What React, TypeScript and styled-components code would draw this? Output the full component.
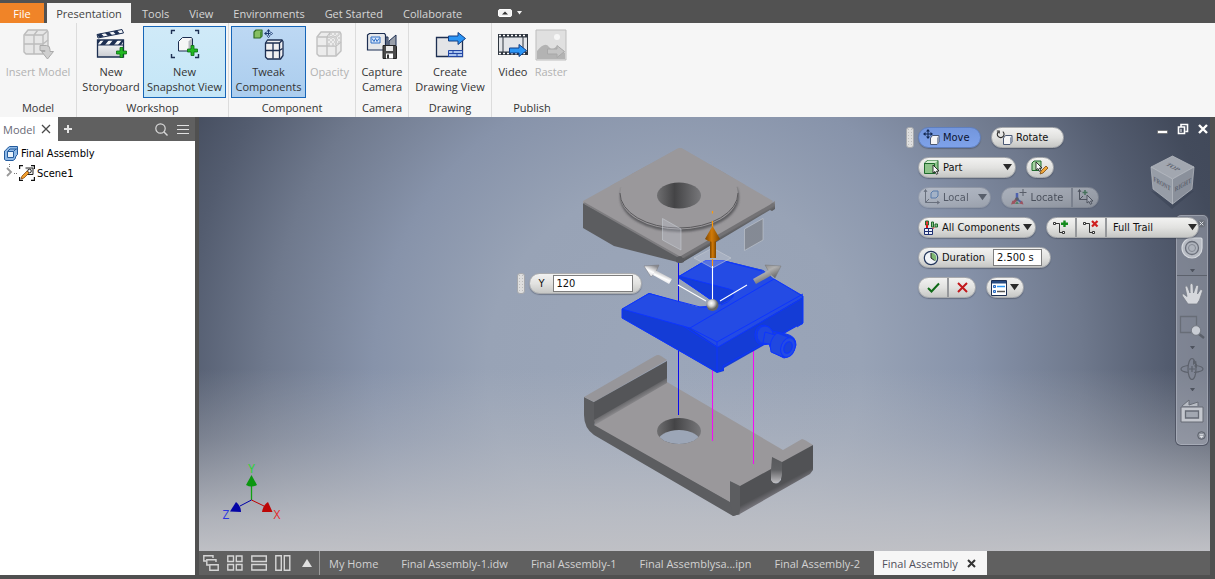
import React from "react";
import styled, { createGlobalStyle, css } from "styled-components";

const Global = createGlobalStyle`
  *, *::before, *::after { box-sizing: border-box; }
  body { margin: 0; background: #505050; }
  body, button, input, select {
    font-family: "Open Sans", "Noto Sans", sans-serif;
    font-size: 11px;
  }
  button { border: 0; padding: 0; background: none; color: inherit; cursor: pointer; }
  svg { display: block; flex: none; }
`;

const Shell = styled.div`
  min-height: 100vh;
  display: flex;
  flex-direction: column;
`;

/* ---------- ribbon ---------- */

const TabBar = styled.nav`
  display: flex;
  align-items: stretch;
  height: 23px;
  padding-top: 3px;
  background: #525252;
`;

const RibbonTab = styled.button<{ $kind?: "file" | "active" }>`
  padding: 0 10px;
  color: #d6d6d6;
  ${(p) => p.$kind === "file" && css`
    width: 44px;
    margin-right: 3px;
    background: #f08428;
    color: #fff;
  `}
  ${(p) => p.$kind === "active" && css`
    width: 84px;
    padding: 0;
    margin-right: 1px;
    background: #f6f6f6;
    color: #444;
  `}
`;

const RibbonToggle = styled.button`
  display: flex;
  align-items: center;
  gap: 5px;
  margin-left: 26px;
`;

const RibbonBody = styled.div`
  display: flex;
  height: 94px;
  background: #f6f6f6;
  color: #333;
`;

const Group = styled.section`
  display: flex;
  flex-direction: column;
  justify-content: space-between;
  padding: 3px 2px 0;
  border-right: 1px solid #dcdcdc;
  &:last-child { border-right: 0; }
`;

const GroupButtons = styled.div`
  display: flex;
`;

const GroupLabel = styled.h2`
  margin: 0;
  font-size: 11px;
  font-weight: 400;
  line-height: 18px;
  text-align: center;
`;

const ToolButton = styled.button<{ $w: number; $tone?: "hover" | "pressed" }>`
  display: flex;
  flex-direction: column;
  align-items: center;
  gap: 3px;
  width: ${(p) => p.$w}px;
  height: 72px;
  padding-top: 2px;
  border: 1px solid transparent;
  line-height: 15px;
  white-space: pre;
  text-align: center;
  ${(p) => p.$tone && css`
    border-color: #1766b8;
    background: ${p.$tone === "hover" ? "linear-gradient(#d0eaf8, #c4e6f7)" : "linear-gradient(#bdd8f3, #abcdee)"};
  `}
  &:disabled { color: #b2b2b2; cursor: default; }
`;

/* ---------- workspace ---------- */

const Workspace = styled.div`
  flex: 1;
  display: flex;
  gap: 4px;
  padding: 0 5px 4px 0;
  background: #505050;
`;

const Side = styled.aside`
  width: 195px;
  flex: none;
  background: #fff;
`;

const SideHead = styled.div`
  display: flex;
  align-items: center;
  height: 24px;
  padding-right: 2px;
  background: #606060;
`;

const SideTab = styled.div`
  display: flex;
  align-items: center;
  justify-content: space-between;
  width: 58px;
  height: 24px;
  padding: 0 7px 0 3px;
  background: #fff;
  color: #6a6a76;
`;

const HeadButton = styled.button<{ $push?: boolean }>`
  display: grid;
  place-items: center;
  width: ${(p) => (p.$push ? 24 : 20)}px;
  height: 20px;
  margin-left: ${(p) => (p.$push ? "auto" : "0")};
`;

const Tree = styled.ul`
  margin: 0;
  padding: 2px 0 0 4px;
  list-style: none;
  font-family: "DejaVu Sans Condensed", "DejaVu Sans", sans-serif;
  font-size: 11px;
`;

const TreeRow = styled.li`
  display: flex;
  align-items: center;
  gap: 2px;
  height: 20px;
  color: #000;
`;

const Main = styled.main`
  flex: 1;
  min-width: 0;
  display: flex;
  flex-direction: column;
`;

const Canvas = styled.div`
  position: relative;
  flex: 1;
  min-height: 430px;
  overflow: hidden;
  background:
    linear-gradient(to bottom, rgba(190,192,198,0) 58%, rgba(190,192,198,0.35) 74%, rgba(190,192,198,0.85) 92%, #bfc0c5 100%),
    radial-gradient(ellipse 53% 122% at 47% 58%, #9ba6b9 0%, #98a3b6 35%, #8793aa 56%, #6f798d 76%, #535c6f 92%, #434b5c 104%, #3e4656 120%);
`;

const Scene = styled.svg`
  position: absolute;
  inset: 0;
  width: 100%;
  height: 100%;
`;

const Triad = styled.svg`
  position: absolute;
  left: 21px;
  bottom: 28px;
`;

/* ---------- floating controls ---------- */

const Float = styled.div`
  position: absolute;
  display: flex;
  align-items: flex-start;
  gap: 4px;
  &, button, input, select {
    font-family: "DejaVu Sans Condensed", "DejaVu Sans", sans-serif;
  }
`;

const ValueFloat = styled(Float)`
  left: calc(50% - 188px);
  top: 156px;
`;

const ToolFloat = styled(Float)`
  top: 10px;
  right: 11px;
`;

const Grip = styled.div`
  width: 8px;
  height: 21px;
  border: 1px solid #a6a8ac;
  border-radius: 3px;
  background: radial-gradient(circle, #bdbdbd 30%, transparent 45%) 0 0 / 3px 3px, #dedede;
`;

const Rows = styled.div`
  display: flex;
  flex-direction: column;
  gap: 9px;
`;

const Row = styled.div`
  display: flex;
  gap: 10px;
`;

const pill = css<{ $w: number }>`
  display: flex;
  align-items: center;
  width: ${(p) => p.$w}px;
  height: 21px;
  border: 1px solid #a9abae;
  border-radius: 11px;
  background: linear-gradient(#f2f2f1, #e2e2e0 50%, #c6c7c5);
  color: #111;
  box-shadow: 0 1px 1px rgba(40, 45, 60, 0.35);
`;

const Pill = styled.div<{ $w: number; $off?: boolean }>`
  ${pill}
  gap: 3px;
  padding: 0 3px 0 4px;
  ${(p) => p.$off && css`opacity: 0.42;`}
`;

const PillButton = styled.button<{ $w: number; $on?: boolean }>`
  ${pill}
  gap: 3px;
  padding: 0 4px;
  ${(p) => p.$on && css`
    background: linear-gradient(#7396dd, #7ea2ea);
    border-color: #5f7fbe;
    color: #0c1430;
  `}
`;

const Segments = styled.div<{ $w: number; $off?: boolean }>`
  ${pill}
  overflow: hidden;
  ${(p) => p.$off && css`opacity: 0.42;`}
`;

const Segment = styled.button<{ $w: number }>`
  display: flex;
  align-items: center;
  justify-content: center;
  gap: 4px;
  width: ${(p) => p.$w}px;
  height: 19px;
  & + & { border-left: 2px solid #96989b; }
`;

const SegmentSelect = styled.div`
  flex: 1;
  display: flex;
  align-items: center;
  height: 19px;
  padding: 0 1px 0 6px;
  border-left: 2px solid #96989b;
`;

const Select = styled.select`
  flex: 1;
  min-width: 0;
  padding: 0;
  border: 0;
  outline: 0;
  appearance: none;
  background: transparent;
  color: #111;
`;

const Field = styled.input<{ $w: number }>`
  width: ${(p) => p.$w}px;
  height: 17px;
  padding: 0 3px;
  border: 1px solid #7e7e7e;
  border-radius: 0;
  background: #fff;
  color: #111;
`;

const FieldLabel = styled.label<{ $w: number; $center?: boolean }>`
  width: ${(p) => p.$w}px;
  text-align: ${(p) => (p.$center ? "center" : "left")};
`;

const WindowControls = styled.div`
  position: absolute;
  top: 5px;
  right: 0;
  display: flex;
  gap: 6px;
`;

const WindowButton = styled.button`
  display: grid;
  place-items: center;
  width: 14px;
  height: 14px;
`;

const Cube = styled.svg`
  position: absolute;
  top: 36px;
  right: 11px;
`;

const NavBar = styled.div`
  position: absolute;
  top: 97px;
  right: 1px;
  display: flex;
  flex-direction: column;
  width: 34px;
  padding: 1px;
  border: 1px solid rgba(60, 66, 80, 0.75);
  border-radius: 6px;
  background: rgba(165, 170, 180, 0.55);
  box-shadow: inset 0 0 0 1px rgba(200, 205, 214, 0.4);
`;

const NavButton = styled.button<{ $h: number; $end?: boolean; $rule?: boolean }>`
  display: flex;
  align-items: center;
  justify-content: ${(p) => (p.$end ? "flex-end" : "center")};
  height: ${(p) => p.$h}px;
  padding: 0 ${(p) => (p.$end ? 1 : 0)}px;
  border-bottom: ${(p) => (p.$rule ? "1px solid #5c616c" : "0")};
`;

/* ---------- document tabs ---------- */

const DocBar = styled.div`
  display: flex;
  align-items: stretch;
  height: 24px;
  background: #606060;
`;

const DocTools = styled.div`
  display: flex;
  align-items: center;
  gap: 8px;
  width: 121px;
  padding-left: 4px;
  border-right: 1px solid #9a9a9a;
`;

const DocTab = styled.button<{ $active?: boolean }>`
  display: flex;
  align-items: center;
  gap: 9px;
  padding: 0 14px 0 9px;
  color: #d2d2d2;
  white-space: nowrap;
  ${(p) => p.$active && css`
    padding: 0 11px 0 8px;
    background: #f6f6f6;
    color: #50505a;
  `}
`;

/* ---------- icons ---------- */

const Caret = ({ c = "#2a2a2a", w = 10 }: { c?: string; w?: number }) => (
  <svg width={w} height={w * 0.7} viewBox="0 0 10 7"><path d="M0 0H10L5 7Z" fill={c} /></svg>
);

const Plus = ({ x, y }: { x: number; y: number }) => (
  <path transform={`translate(${x} ${y})`} d="M4 .5h3v3.500h3.500v3H7v3.500h-3V7H.5V4H4z" fill="#22b822" stroke="#0b6d12" strokeWidth=".8" />
);

const BlueArrow = ({ x, y, off }: { x: number; y: number; off?: boolean }) => (
  <path transform={`translate(${x} ${y})`} d="M.5 4H10V.5L17.500 6.500 10 12.500V9H.5z" fill={off ? "#c4c4c4" : "#2b95f5"} stroke={off ? "#a8a8a8" : "#123f86"} />
);

const Box4 = ({ c, f }: { c: string; f: string }) => (
  <g stroke={c} strokeWidth="1.400" strokeLinejoin="round">
    <path d="M1 6L5 1H24L25 3V20L20 25H3L1 23Z" fill={f} />
    <path d="M1.500 6H20V24.500M20 6L24.500 2M11 6V25M1 15H20L25 11M11 6L14.500 1.500" fill="none" />
  </g>
);

const InsertModelIcon = () => (
  <svg width="32" height="32" viewBox="0 0 32 32">
    <g transform="translate(1 0)"><Box4 c="#bcbcbc" f="#e6e6e6" /></g>
    <path d="M18 16.500h6.500q3.500 0 3.500 4v2h3.500l-6 7.500-6-7.500h3.500v-1H18z" fill="#cfcfcf" stroke="#aaa" />
  </svg>
);

const StoryboardIcon = () => (
  <svg width="32" height="32" viewBox="0 0 32 32">
    <defs><linearGradient id="sb" x2="0" y2="1"><stop offset="0" stopColor="#fff" /><stop offset="1" stopColor="#c9ccd2" /></linearGradient></defs>
    <path d="M2 5.500L27 .5 28.500 4 3 9z" fill="#f4f6fa" stroke="#1d2f52" />
    <path d="M2 5.500l4-1 3 3-5 1zM10 4l4-1 3 3-4 1zM18 2.500l4-1 3 3-4 1z" fill="#1d2f52" />
    <path d="M2.500 11h26v17h-26z" fill="url(#sb)" stroke="#1d2f52" strokeWidth="1.300" />
    <path d="M3 11h3l-3 4zM9 11h5l-4 5H5zM18 11h5l-4 5h-5zM27 11h1v2l-2 3h-3z" fill="#1d2f52" />
    <path d="M2.500 16h26" stroke="#1d2f52" />
    <Plus x={21} y={18} />
  </svg>
);

const SnapshotIcon = () => (
  <svg width="32" height="32" viewBox="0 0 32 32">
    <path d="M2.500 5V1.500H6M26 1.500h3.500V5M2.500 25v3.500H6M26 28.500h3.500V25" fill="none" stroke="#1d2f52" strokeWidth="1.400" />
    <path d="M9.500 12.500l4-4h9l1 1.500v8l-4 4h-10z" fill="#f6f6f6" stroke="#1d2f52" strokeLinejoin="round" />
    <path d="M19.500 12.500l3.500-3.500v9l-3.500 3.500z" fill="#b9bcc2" />
    <Plus x={18} y={16} />
  </svg>
);

const TweakIcon = () => (
  <svg width="34" height="32" viewBox="0 0 34 32">
    <path d="M2 3l2-2h6v6L8 9H2z" fill="#86bf62" stroke="#2f6a25" strokeWidth="1.200" strokeLinejoin="round" />
    <path d="M8 3l2-2v6L8 9z" fill="#4c8f3a" />
    <path d="M16.500 0l2 2.500h-4zM16.500 9l2-2.500h-4zM12 4.500L14.500 2.500v4zM21 4.500L18.500 2.500v4zM13 4h7v1h-7zM16 1h1v7h-1z" fill="#1d3a70" />
    <g stroke="#1d2f52" strokeWidth="1.300" strokeLinejoin="round">
      <path d="M13.500 14l2-3h14.500l1 1.500v14l-2.500 3.500h-13l-2-2z" fill="#f0f0f2" />
      <path d="M14 14h13.500v15.500M27.500 14l3-3M21 14v15.500M13.500 21.500h14l3-2" fill="none" />
    </g>
  </svg>
);

const OpacityIcon = () => (
  <svg width="32" height="32" viewBox="0 0 32 32">
    <defs><pattern id="chk" width="4" height="4" patternUnits="userSpaceOnUse"><path d="M0 0h2v2H0zM2 2h2v2H2z" fill="#d4d4d4" /></pattern></defs>
    <g transform="translate(2 2)"><Box4 c="#c0c0c0" f="#ececec" /><path d="M12 2h12v9l-3 4h-9z" fill="url(#chk)" /></g>
  </svg>
);

const CameraIcon = () => (
  <svg width="32" height="32" viewBox="0 0 32 32">
    <path d="M1.500 6l2-1.500h15l1 1.500v13l-2 2h-16z" fill="#e5e7ea" stroke="#1d2f52" strokeWidth="1.200" />
    <path d="M5 8h9v6H5z" fill="#dbe9fb" stroke="#2f6fc6" />
    <path d="M6 9.500l2 3 1.500-3 1.500 3 2-3" fill="none" stroke="#2f6fc6" />
    <path d="M20 8l2 0v10h-2zM23 12l7-6v12h-7z" fill="#9aa0aa" stroke="#1d2f52" />
    <path d="M17 16.500h12.500l1 1V29.500H17z" fill="#4a4a4a" stroke="#222" />
    <path d="M20 17h7v5h-7z" fill="#e9e9e9" /><path d="M20 24.500h7v5h-7z" fill="#fff" /><path d="M21 25.500h2v4h-2z" fill="#333" />
  </svg>
);

const DrawingIcon = () => (
  <svg width="34" height="32" viewBox="0 0 34 32">
    <path d="M3.500 8.500h26v19h-26z" fill="#e3e4e7" stroke="#1d2f52" strokeWidth="1.300" />
    <path d="M15.500 21.500h14v6h-14zM15.500 24.500h14M20 21.500v3M24 24.500v3" fill="#a9c3ee" stroke="#2347a5" />
    <BlueArrow x={15} y={3} />
  </svg>
);

const VideoIcon = () => (
  <svg width="32" height="32" viewBox="0 0 32 32">
    <path d="M1 5h30v21H1z" fill="#2f3640" />
    <path d="M2 8.500h28v14H2z" fill="#e3e5e9" /><path d="M6 8v15M26 8v15" stroke="#2f3640" />
    <path d="M2 6.500h28M2 24.500h28" stroke="#fff" strokeWidth="1.500" strokeDasharray="2 2" />
    <BlueArrow x={12} y={15} />
  </svg>
);

const RasterIcon = () => (
  <svg width="32" height="32" viewBox="0 0 32 32">
    <path d="M1 1h30v30H1z" fill="#e0e0e0" stroke="#bdbdbd" />
    <path d="M2 22q8-10 12-4l3 3 5-4 8 7v6H2z" fill="#b3b3b3" />
    <circle cx="22" cy="8" r="3" fill="#f6f6f6" />
    <BlueArrow x={12} y={16} off />
  </svg>
);

const CubeGlyph = ({ top }: { top: "move" | "rotate" }) => (
  <svg width="17" height="17" viewBox="0 0 17 17">
    {top === "move" ? (
      <path d="M5 0l2 2.500H5.500v2H7.500V3L10 5 7.500 7V5.500h-2v2H7L5 10 3 7.500h1.500v-2h-2V7L0 5l2.500-2v1.500h2v-2H3z" fill="#12264d" />
    ) : (
      <path d="M2.300 2.800A3.400 3.400 0 1 0 6.800 2.600M.8 2h2.400v2.400" fill="none" stroke="#2a2a2a" strokeWidth="1.100" />
    )}
    <path d="M7.500 9l2-2.500h6.500v6.500l-2 2.500H7.500z" fill="#f6f6f6" stroke="#4a5874" strokeLinejoin="round" />
    <path d="M14 9l2-2.500v6.500l-2 2.500z" fill="#8e99ad" />
  </svg>
);

const Pointer = ({ x, y }: { x: number; y: number }) => (
  <path transform={`translate(${x} ${y})`} d="M0 0v8l2-1.500 1.300 2.800 1.500-.7L3.500 6H6z" fill="#fff" stroke="#222" strokeWidth=".9" />
);

const PartIcon = () => (
  <svg width="17" height="17" viewBox="0 0 17 17">
    <path d="M1.500 4l3-2.500h10.500v10l-3 3H1.500z" fill="#8ec48a" stroke="#1f6a2c" strokeLinejoin="round" />
    <path d="M2 4l3-2.500h10L12 4z" fill="#d5edd2" /><path d="M1.500 4.500h10v10" fill="none" stroke="#1f6a2c" />
    <Pointer x={10} y={6} />
  </svg>
);

const PartEditIcon = () => (
  <svg width="18" height="17" viewBox="0 0 18 17">
    <path d="M1 4l2-2h7v7l-2 2.500H1z" fill="#a5d3a0" stroke="#1f6a2c" />
    <Pointer x={5} y={3} />
    <path d="M9 15l1-3 5-5 2 2-5 5z" fill="#f2a83b" stroke="#7a4b12" strokeWidth=".8" />
  </svg>
);

const LocalIcon = () => (
  <svg width="17" height="17" viewBox="0 0 17 17">
    <path d="M2.500 1v12.500H16M1 3l1.500-2.500L4 3M14 12l2.500 1.500L14 15M2.500 13.500L6 10" fill="none" stroke="#444" />
    <path d="M8 4l2-2h5v5l-2 2H8z" fill="#cfe2f5" stroke="#1f5fae" />
  </svg>
);

const LocateIcon = () => (
  <svg width="17" height="17" viewBox="0 0 17 17">
    <path d="M7 4v6" stroke="#1b3bd5" strokeWidth="2.500" /><path d="M7 10l-4 4" stroke="#d51b1b" strokeWidth="2.500" /><path d="M7 10l5 4" stroke="#1b3bb5" strokeWidth="2" />
    <path d="M1 15.500l1.500-4 3 3zM13.500 15.500l-1.500-4-3 3z" fill="#d51b1b" /><path d="M5 15l2-3 2 3z" fill="#1f8a2c" /><circle cx="7" cy="10" r="1.800" fill="#333" />
    <path d="M13 0v7M9.500 3.500h7" stroke="#333" />
  </svg>
);

const AxisPickIcon = () => (
  <svg width="17" height="17" viewBox="0 0 17 17">
    <path d="M2.500 1v9.500H12M1 3l1.500-2.500L4 3M2.500 10.500L6 7" fill="none" stroke="#333" />
    <path d="M8 1v5M5.500 3.500h5" stroke="#1f7a2c" strokeWidth="1.500" /><Pointer x={10} y={6} />
  </svg>
);

const ComponentsIcon = () => (
  <svg width="16" height="16" viewBox="0 0 16 16">
    <path d="M2.500 1h3v4h-3z" fill="#e33" stroke="#1f6a2c" /><path d="M8.500 2h2v5h-2zM12 4h2.500v3H12z" fill="#8ec48a" stroke="#1f6a2c" />
    <path d="M4 5v3" stroke="#d11" strokeWidth="2" />
    <path d="M1.500 8.500h8v6h-8zM5.500 8.500v6M1.500 11.500h8" fill="#eef2fa" stroke="#1d2f72" />
    <path d="M9.500 9l2-2" stroke="#c11" />
  </svg>
);

const TrailIcon = ({ del }: { del?: boolean }) => (
  <svg width="18" height="16" viewBox="0 0 18 16">
    <path d="M1.500 2.500h2v2h-2zM10.500 11.500h2v2h-2z" fill="#fff" stroke="#333" />
    <path d="M4 3.500h3.500v9H10" fill="none" stroke="#333" />
    {del ? <path d="M10 1l5.500 5.500M15.500 1L10 6.500" stroke="#cf1f1f" strokeWidth="2.200" /> : <path d="M12.500 .5v6.500M9 3.700h7" stroke="#148a1c" strokeWidth="2.400" />}
  </svg>
);

const ClockIcon = () => (
  <svg width="16" height="16" viewBox="0 0 16 16">
    <circle cx="8" cy="8" r="6.700" fill="#f1f4f8" stroke="#23365c" strokeWidth="1.200" />
    <path d="M8 8V2.500A5.500 5.500 0 0 1 12.500 11z" fill="#7db873" /><path d="M8 3v5l3.500 2.500" fill="none" stroke="#222" />
  </svg>
);

const OptionsIcon = () => (
  <svg width="16" height="16" viewBox="0 0 16 16">
    <path d="M.5 .5h15v15H.5z" fill="#fff" stroke="#1d2f52" /><path d="M1 1h14v2.500H1z" fill="#274a80" />
    <path d="M2.500 5.500h2v2h-2zM2.500 10.500h2v2h-2z" fill="#9cc2ee" stroke="#2c6cc0" /><path d="M6 6.500h8" stroke="#2b95f5" strokeWidth="1.500" /><path d="M6 11.500h8" stroke="#555" strokeWidth="1.500" />
  </svg>
);

/* ---------- model scene ---------- */

const edge = { stroke: "#0d35ff", strokeWidth: 1, fill: "none" };

const ModelScene = () => (
  <Scene viewBox="199 117 1011 434" preserveAspectRatio="xMidYMid meet" role="img" aria-label="Exploded assembly">
    <defs>
      <linearGradient id="bore"><stop offset="0" stopColor="#6f6f71" /><stop offset=".4" stopColor="#444446" /><stop offset="1" stopColor="#77777a" /></linearGradient>
      <linearGradient id="lip" gradientUnits="userSpaceOnUse" x1="724" y1="227" x2="729" y2="236"><stop offset="0" stopColor="#999799" /><stop offset=".55" stopColor="#707073" /><stop offset="1" stopColor="#505154" /></linearGradient>
      <linearGradient id="fillet" gradientUnits="userSpaceOnUse" x1="628" y1="397" x2="633" y2="406"><stop offset="0" stopColor="#535457" /><stop offset="1" stopColor="#9a989b" /></linearGradient>
      <linearGradient id="endface" gradientUnits="userSpaceOnUse" x1="770" y1="470" x2="781" y2="491"><stop offset="0" stopColor="#515255" /><stop offset=".75" stopColor="#515255" /><stop offset="1" stopColor="#727177" /></linearGradient>
      <linearGradient id="slot" x2="0" y2="1"><stop offset="0" stopColor="#58595c" /><stop offset=".5" stopColor="#606164" /><stop offset="1" stopColor="#c0bfc2" /></linearGradient>
      <linearGradient id="gold"><stop offset="0" stopColor="#7d4600" /><stop offset=".45" stopColor="#d17a08" /><stop offset="1" stopColor="#7d4600" /></linearGradient>
      <radialGradient id="ball" cx=".4" cy=".35"><stop offset="0" stopColor="#fff" /><stop offset=".5" stopColor="#d0d0d0" /><stop offset="1" stopColor="#666" /></radialGradient>
      <linearGradient id="steel" x1=".6" y1="0" x2="0" y2="1"><stop offset="0" stopColor="#8a8a8e" /><stop offset=".45" stopColor="#fff" /><stop offset="1" stopColor="#b8bac4" /></linearGradient>
      <linearGradient id="steel2" x1="0" y1="0" x2=".6" y2="1"><stop offset="0" stopColor="#8c8c8c" /><stop offset=".4" stopColor="#b0b0b0" /><stop offset="1" stopColor="#666" /></linearGradient>
      <clipPath id="hole2"><ellipse cx="679" cy="431" rx="22" ry="13" /></clipPath>
      <clipPath id="plate"><path d="M677 149Q680 147 683 149L773 201L768 208L680 257L583 203V201z" /></clipPath>
      <filter id="soft"><feGaussianBlur stdDeviation="1.200" /></filter>
    </defs>

    {/* base bracket */}
    <path d="M584 397L594 402V424L731 502V482L740 486V514L733 516L594 435Q584 428 584 415z" fill="#5c5d60" />
    <path d="M584 397L655 356Q658 354 661 356L667 360L594 402z" fill="#97969a" />
    <path d="M594 402L667 361V383L594 424z" fill="#545558" />
    <path d="M594 425L667 382L783 450L802 439Q804 439 813 445L782 463L771 470L740 487L730 481V502z" fill="#9a989b" />
    <path d="M594 420L667 378V383L595 425z" fill="url(#fillet)" />
    <path d="M730 481L740 486V514L733 516L730 502z" fill="#5c5d60" />
    <path d="M740 486L771 469V480Q776 487 781 480L782 462L813 445V470L810 474L738 515Q740 513 740 510z" fill="url(#endface)" />
    <path d="M772 457L782 462V474Q781 483 774 483Q771 482 771 477V470z" fill="url(#slot)" />
    <ellipse cx="679" cy="431" rx="22" ry="13" fill="url(#bore)" />
    <ellipse cx="679" cy="443" rx="22" ry="13" fill="#9ca6b7" clipPath="url(#hole2)" />

    {/* tweak trails */}
    <path d="M678 262h1V415h-1z" fill="#0a0aee" />
    <path d="M712 370h1V441h-1zM753 345h1V464h-1z" fill="#f50af5" />

    {/* top plate */}
    <path d="M583 203L680 256L683 262Q680 264 677 262L614 246L583 228z" fill="#5c5d60" />
    <path d="M680 254L775 201V209L772 211L770 210L683 262L678 261z" fill="url(#lip)" />
    <path d="M677 149Q680 147 683 149L773 201L768 208L680 257L583 203V201z" fill="#9a989b" />
    <path d="M584 203L679 257" stroke="#7e7d80" strokeWidth="2" />
    <path d="M676 258Q680 254 684 258V262Q680 264 676 262z" fill="#58595c" />
    <path d="M682 257L774 204" stroke="#737275" strokeWidth="3" />
    <g clipPath="url(#plate)">
      <ellipse cx="679.500" cy="197" rx="59.500" ry="35" fill="#5c5b5e" filter="url(#soft)" />
      <ellipse cx="679" cy="194.500" rx="59" ry="35" fill="#9a989b" />
      <path d="M610 140H750V183L736 187L622 187L610 187z" fill="#9a989b" />
      <path d="M620 193A59 35 0 0 0 738 193" fill="none" stroke="#5a595c" />
    </g>
    <ellipse cx="679" cy="195.500" rx="22" ry="13" fill="url(#bore)" />

    {/* selected clamp */}
    <path d="M622 309L649 293L697 307H708L712 301L679 278V276L706 260H722L763 270L774 279L803 296V324L796 327L724 368V371L717 373L622 318z" fill="#143cd6" />
    <path d="M622 309L649 293L697 307L721 304Q736 298 733 290L679 276L706 260H722L763 270L774 279L803 297L718 347L690 328z" fill="#244be4" />
    <path d="M679 277L729 289Q735 291 733 297L721 304L712 301z" fill="#153dd8" />
    <path d="M622 309L649 293.500L700 307H710M679 276.500L706 260.500H722L762 271M679 276L729 289Q735 291 733 297Q728 303 721 305M679 278L712 300M622 309L690 328L717 342V372M690 328L774 279L803 296V323L797 327M717 342L803 294M718 347L803 298M683 326Q697 335 717 347M622 309V318L717 372L723 370V366L796 326" {...edge} />
    <path d="M755 335Q755 326 764 325Q770 326 772 331L786 334Q796 336 796 345Q793 357 784 358L772 352L769 344L761 345Q755 342 755 335z" fill="#1840da" stroke="#0d35ff" />
    <ellipse cx="765" cy="335" rx="8" ry="9" fill="#1f47e0" stroke="#0d35ff" />
    <path d="M765 332L775 335V345L763 343z" fill="#2048e0" stroke="#0d35ff" />
    <path d="M777 333L788 337L783 357L771 352Q768 340 777 333z" fill="#2048e0" stroke="#0d35ff" />
    <ellipse cx="788" cy="347.500" rx="7" ry="10" transform="rotate(20 788 347.500)" fill="#244be4" stroke="#0d35ff" />
    <ellipse cx="788" cy="347.500" rx="4" ry="6" transform="rotate(20 788 347.500)" fill="#1a42dc" stroke="#0d35ff" />

    {/* manipulator */}
    <g fill="#c9ced9" fillOpacity=".3" stroke="#c9cdd6" strokeOpacity=".55">
      <path d="M662.500 218.500L681 229V250L662.500 240z" /><path d="M744.500 229L763 218.500V240L744.500 250.500z" fill="#7c7f86" fillOpacity=".7" /><path d="M694 258L712.500 248L731 258L712.500 268z" />
    </g>
    <path d="M712.500 266V300M678 285L706 301M720 301L747 285" stroke="#fff" strokeWidth="1.100" />
    <path d="M712.500 211V213.500M712.500 221V228M712.500 259V266M712.500 299V301" stroke="#ff9a0a" strokeWidth="1.200" />
    <path d="M710 240h6v18h-6z" fill="url(#gold)" />
    <path d="M712.500 226L720 239Q712.500 245 705 239z" fill="url(#gold)" />
    <path d="M644 266L659 265Q657 272 651 277z" fill="url(#steel)" stroke="#77777c" strokeWidth=".5" />
    <path d="M655 270L672 279L669 284L653 275z" fill="url(#steel)" />
    <path d="M781 266L765 265Q768 272 775 278z" fill="url(#steel2)" stroke="#777" strokeWidth=".5" />
    <path d="M753 279L769 270L772 275L756 284z" fill="url(#steel2)" />
    <circle cx="712.500" cy="305" r="6" fill="url(#ball)" />
  </Scene>
);

const ViewCube = () => (
  <Cube width="54" height="56" viewBox="1145 153 54 56">
    <path d="M1151 191L1172 209L1194 191L1172 196z" fill="#30384a" opacity=".35" />
    <path d="M1172.500 156L1194 167L1172.500 179L1151 167z" fill="#a2a7b0" stroke="#b9bdc4" strokeWidth=".7" />
    <path d="M1151 167L1172.500 179V204L1153 189z" fill="#979da7" stroke="#b9bdc4" strokeWidth=".7" />
    <path d="M1194 167L1172.500 179V204L1192 189z" fill="#8a909b" stroke="#b9bdc4" strokeWidth=".7" />
    <g fill="#5c626e" fontSize="7" fontFamily="Liberation Serif, serif" fontWeight="700" textAnchor="middle">
      <text transform="matrix(.85 .45 -.85 .45 1171 168)">TOP</text>
      <text transform="matrix(.7 .4 0 1 1162 186)">FRONT</text>
      <text transform="matrix(.7 -.4 0 1 1183 187)">RIGHT</text>
    </g>
  </Cube>
);

const TriadIcon = () => (
  <Triad width="64" height="66" viewBox="220 456 64 66" fontFamily="Open Sans, sans-serif" fontSize="12" textAnchor="middle">
    <path d="M251.500 499V484" stroke="#12a012" strokeWidth="1.300" /><path d="M251.500 499L264 505" stroke="#c00000" /><path d="M251.500 499L240 505" stroke="#0000a8" />
    <path d="M251.500 474L257 484Q251.500 487 246 484z" fill="#0b960f" />
    <path d="M272.500 511L268 501Q263 504 262 511z" fill="#bd0606" />
    <path d="M230 510.500L236 501Q241 505 241 511z" fill="#0404a6" />
    <text x="251.500" y="472" fill="#27d62c">Y</text><text x="277" y="517.500" fill="#e32a2a">X</text><text x="226" y="517.500" fill="#2a35e0">Z</text>
  </Triad>
);

const Chevron = () => <Caret c="#4e535e" w={5} />;

export default function App() {
  return (
    <Shell>
      <Global />
      <TabBar>
        <RibbonTab $kind="file">File</RibbonTab>
        <RibbonTab $kind="active">Presentation</RibbonTab>
        {["Tools", "View", "Environments", "Get Started", "Collaborate"].map((t) => <RibbonTab key={t}>{t}</RibbonTab>)}
        <RibbonToggle aria-label="Minimize ribbon">
          <svg width="14" height="8" viewBox="0 0 14 8"><rect x=".5" y=".5" width="13" height="7" rx="1.500" fill="#f2f2f2" stroke="#fff" /><path d="M4 5.500h6L7 2.500z" fill="#333" /></svg>
          <Caret c="#f2f2f2" w={5} />
        </RibbonToggle>
      </TabBar>

      <RibbonBody>
        <Group>
          <GroupButtons><ToolButton $w={72} disabled><InsertModelIcon />Insert Model</ToolButton></GroupButtons>
          <GroupLabel>Model</GroupLabel>
        </Group>
        <Group>
          <GroupButtons>
            <ToolButton $w={64}><StoryboardIcon />{"New\nStoryboard"}</ToolButton>
            <ToolButton $w={83} $tone="hover"><SnapshotIcon />{"New\nSnapshot View"}</ToolButton>
          </GroupButtons>
          <GroupLabel>Workshop</GroupLabel>
        </Group>
        <Group>
          <GroupButtons>
            <ToolButton $w={75} $tone="pressed"><TweakIcon />{"Tweak\nComponents"}</ToolButton>
            <ToolButton $w={47} disabled><OpacityIcon />Opacity</ToolButton>
          </GroupButtons>
          <GroupLabel>Component</GroupLabel>
        </Group>
        <Group>
          <GroupButtons><ToolButton $w={48}><CameraIcon />{"Capture\nCamera"}</ToolButton></GroupButtons>
          <GroupLabel>Camera</GroupLabel>
        </Group>
        <Group>
          <GroupButtons><ToolButton $w={78}><DrawingIcon />{"Create\nDrawing View"}</ToolButton></GroupButtons>
          <GroupLabel>Drawing</GroupLabel>
        </Group>
        <Group>
          <GroupButtons>
            <ToolButton $w={38}><VideoIcon />Video</ToolButton>
            <ToolButton $w={38} disabled><RasterIcon />Raster</ToolButton>
          </GroupButtons>
          <GroupLabel>Publish</GroupLabel>
        </Group>
      </RibbonBody>

      <Workspace>
        <Side>
          <SideHead>
            <SideTab>
              Model
              <button aria-label="Close panel"><svg width="10" height="10" viewBox="0 0 10 10"><path d="M1 1l8 8M9 1L1 9" stroke="#4a4a4a" strokeWidth="1.300" /></svg></button>
            </SideTab>
            <HeadButton aria-label="Add panel"><svg width="8" height="8" viewBox="0 0 8 8"><path d="M4 0v8M0 4h8" stroke="#e4e4e4" strokeWidth="2" /></svg></HeadButton>
            <HeadButton $push aria-label="Search"><svg width="13" height="13" viewBox="0 0 13 13"><circle cx="5.500" cy="5.500" r="4.700" fill="none" stroke="#d8d8d8" strokeWidth="1.200" /><path d="M9 9l3.500 3.500" stroke="#d8d8d8" strokeWidth="1.400" /></svg></HeadButton>
            <HeadButton aria-label="Panel menu"><svg width="12" height="9" viewBox="0 0 12 9"><path d="M0 .5h12M0 4.500h12M0 8.500h12" stroke="#e0e0e0" /></svg></HeadButton>
          </SideHead>
          <Tree>
            <TreeRow>
              <svg width="15" height="15" viewBox="0 0 15 15"><path d="M.5 5l2-1.500V3l3-2.500h8v8l-1.500 1.500-1 3-2 1.500H2l-1.500-1z" fill="#8fb9e6" stroke="#245c9e" /><path d="M3.500 5.500h6v6h-6z" fill="#e8f2fb" stroke="#245c9e" /><path d="M9.500 5.500L12 3M3.500 5.500L6 3h7" fill="none" stroke="#245c9e" /></svg>
              Final Assembly
            </TreeRow>
            <TreeRow>
              <svg width="13" height="18" viewBox="0 0 13 18"><path d="M3 4l4 4-4 4" fill="none" stroke="#999" strokeWidth="1.800" /><path d="M5.500 0v1M5.500 2v1M10 9.500h1M12 9.500h1" stroke="#777" /></svg>
              <svg width="16" height="16" viewBox="0 0 16 16"><path d="M.6 4V.6H4M12 .6h3.400V4M.6 12v3.400H4M12 15.400h3.400V12" fill="none" stroke="#111" strokeWidth="1.200" /><path d="M6.500 3h7.500v6.500H8" fill="#eee" stroke="#222" /><circle cx="10.500" cy="6" r="1.800" fill="#fff" stroke="#222" /><path d="M2 14l1-3 5-5 2 2-5 5z" fill="#f2a02c" stroke="#8a4a10" strokeWidth=".8" /></svg>
              Scene1
            </TreeRow>
          </Tree>
        </Side>

        <Main>
          <Canvas>
            <ModelScene />
            <TriadIcon />
            <WindowControls>
              <WindowButton aria-label="Minimize"><svg width="12" height="12" viewBox="0 0 12 12"><path d="M.5 7.500h10v3H.5z" fill="#fff" stroke="#555" strokeWidth=".6" /></svg></WindowButton>
              <WindowButton aria-label="Restore"><svg width="12" height="12" viewBox="0 0 12 12"><path d="M4 3.500V1.500h6.500v7H8.500M1.500 4h6v6.500h-6z" fill="none" stroke="#fff" strokeWidth="1.600" /><path d="M4 5.800v3.200" stroke="#fff" /></svg></WindowButton>
              <WindowButton aria-label="Close"><svg width="12" height="12" viewBox="0 0 12 12"><path d="M2 2l8 8M10 2l-8 8" stroke="#fff" strokeWidth="2.400" /></svg></WindowButton>
            </WindowControls>
            <ViewCube />

            <NavBar>
              <NavButton $h={14} $end aria-label="Close navigation bar"><svg width="9" height="9" viewBox="0 0 9 9"><circle cx="4.500" cy="4.500" r="4" fill="#6d727c" /><path d="M2.700 2.700l3.600 3.600M6.300 2.700L2.700 6.300" stroke="#dadde2" /></svg></NavButton>
              <NavButton $h={36} aria-label="Steering wheel"><svg width="22" height="22" viewBox="0 0 22 22"><path d="M1 11A10 10 0 0 1 11 1H20l1 1V11A10 10 0 1 1 1 11z" fill="#b8bcc4" stroke="#d6d9de" strokeWidth="1.200" /><circle cx="11" cy="11" r="6.500" fill="#aeb3bc" stroke="#6a6f7a" strokeWidth="1.300" /><circle cx="11" cy="11" r="3.500" fill="none" stroke="#858a94" /></svg></NavButton>
              <NavButton $h={10} $rule aria-label="Wheel options"><Chevron /></NavButton>
              <NavButton $h={36} aria-label="Pan"><svg width="24" height="24" viewBox="0 0 24 24"><path d="M8 22L2.500 14Q1 11.500 3.500 12L7 14.500 5 5Q5.500 3 7.500 4.500L10 11 10 2.500Q11.500 .5 13 2.500L13.500 11 16 3.500Q18 2.500 18.500 4.500L17.500 12 20.500 7.500Q22.500 7 22.500 9L19.500 18 17 22z" fill="#d5d7dc" stroke="#777c86" strokeWidth=".8" /></svg></NavButton>
              <NavButton $h={29} aria-label="Zoom window"><svg width="26" height="24" viewBox="0 0 26 24"><path d="M1.500 1.500h16v16h-16z" fill="none" stroke="#686d77" strokeWidth="1.300" /><path d="M20 19l5 4" stroke="#5a5f69" strokeWidth="2.500" /><circle cx="17" cy="15.500" r="4.800" fill="#c9cdd4" stroke="#787d87" strokeWidth="1.200" /></svg></NavButton>
              <NavButton $h={13} aria-label="Zoom options"><Chevron /></NavButton>
              <NavButton $h={29} aria-label="Orbit"><svg width="24" height="24" viewBox="0 0 24 24"><g fill="none" stroke="#5d626c" strokeWidth="1.200"><ellipse cx="12" cy="12" rx="4" ry="10.500" /><path d="M8 8.500Q1 9.500 1 12T8 15.500M16 8.500Q23 9.500 23 12T14 15.500M12 9v6M9 12h6" /></g><path d="M13 3l4 2-4 3zM17 6v5l-3-2z" fill="#5d626c" /></svg></NavButton>
              <NavButton $h={13} aria-label="Orbit options"><Chevron /></NavButton>
              <NavButton $h={30} aria-label="Look at"><svg width="24" height="24" viewBox="0 0 24 24"><path d="M2 7L9 1v5L18 3V7" fill="#b8bcc4" stroke="#686d77" /><path d="M1 8h22v15H1z" fill="#c4c7ce" stroke="#666b75" /><path d="M5.500 12h13v7h-13z" fill="#a2a7b1" stroke="#666b75" strokeWidth="1.300" /></svg></NavButton>
              <NavButton $h={18} $end aria-label="Customize"><svg width="9" height="9" viewBox="0 0 9 9"><circle cx="4.500" cy="4.500" r="3.800" fill="#8d929c" stroke="#5c616b" /><path d="M2.500 3.500h4M2.800 5h3.400L4.500 6.800z" stroke="#e6e8ec" fill="#e6e8ec" strokeWidth=".7" /></svg></NavButton>
            </NavBar>

            <ValueFloat>
              <Grip />
              <Pill $w={113}>
                <FieldLabel htmlFor="dy" $w={16} $center>Y</FieldLabel>
                <Field id="dy" $w={80} defaultValue="120" />
              </Pill>
            </ValueFloat>

            <ToolFloat>
              <Grip />
              <Rows>
                <Row>
                  <PillButton $w={63} $on><CubeGlyph top="move" />Move</PillButton>
                  <PillButton $w={73}><CubeGlyph top="rotate" />Rotate</PillButton>
                </Row>
                <Row>
                  <Pill $w={98}><PartIcon /><Select aria-label="Selection filter"><option>Part</option></Select><Caret w={9} /></Pill>
                  <PillButton $w={28} aria-label="Edit part"><PartEditIcon /></PillButton>
                </Row>
                <Row>
                  <Pill $w={73} $off><LocalIcon /><Select aria-label="Coordinate space"><option>Local</option></Select><Caret w={9} /></Pill>
                  <Segments $w={98} $off>
                    <Segment $w={69}><LocateIcon />Locate</Segment>
                    <Segment $w={27} aria-label="Pick axis"><AxisPickIcon /></Segment>
                  </Segments>
                </Row>
                <Row>
                  <Pill $w={118}><ComponentsIcon /><Select aria-label="Component scope"><option>All Components</option></Select><Caret w={9} /></Pill>
                  <Segments $w={153}>
                    <Segment $w={28} aria-label="Add trail"><TrailIcon /></Segment>
                    <Segment $w={30} aria-label="Delete trail"><TrailIcon del /></Segment>
                    <SegmentSelect><Select aria-label="Trail type"><option>Full Trail</option></Select><Caret w={9} /></SegmentSelect>
                  </Segments>
                </Row>
                <Row>
                  <Pill $w={133}><ClockIcon /><FieldLabel htmlFor="dur" $w={48}>Duration</FieldLabel><Field id="dur" $w={49} defaultValue="2.500 s" /></Pill>
                </Row>
                <Row>
                  <Segments $w={58}>
                    <Segment $w={28} aria-label="Accept"><svg width="13" height="11" viewBox="0 0 13 11"><path d="M1 6l3.500 3.500L12 1.500" fill="none" stroke="#0f6a17" strokeWidth="2" /></svg></Segment>
                    <Segment $w={28} aria-label="Cancel"><svg width="11" height="11" viewBox="0 0 11 11"><path d="M1 1l9 9M10 1L1 10" stroke="#c2181c" strokeWidth="2" /></svg></Segment>
                  </Segments>
                  <PillButton $w={38} aria-label="Options"><OptionsIcon /><Caret w={9} /></PillButton>
                </Row>
              </Rows>
            </ToolFloat>
          </Canvas>

          <DocBar>
            <DocTools>
              <button aria-label="Cascade"><svg width="16" height="16" viewBox="0 0 16 16"><path d="M3 6H.8V.8H10V3M6 10H3.800V4.800H13V7M6.800 9.800h8.400v5.400H6.800z" fill="none" stroke="#d6d6d6" strokeWidth="1.400" /></svg></button>
              <button aria-label="Tile"><svg width="16" height="16" viewBox="0 0 16 16"><path d="M.8 1h5.700v5.500H.8zM9.300 1H15v5.500H9.300zM.8 9.500h5.700V15H.8zM9.300 9.500H15V15H9.300z" fill="none" stroke="#d6d6d6" strokeWidth="1.400" /></svg></button>
              <button aria-label="Tile horizontally"><svg width="16" height="16" viewBox="0 0 16 16"><path d="M.8 1h14.500v5.500H.8zM.8 9.500h14.500V15H.8z" fill="none" stroke="#d6d6d6" strokeWidth="1.400" /></svg></button>
              <button aria-label="Tile vertically"><svg width="16" height="16" viewBox="0 0 16 16"><path d="M.8 .8h5.500v14.500H.8zM9.300 .8h5.500v14.500H9.300z" fill="none" stroke="#d6d6d6" strokeWidth="1.400" /></svg></button>
              <button aria-label="Show all documents"><svg width="16" height="8" viewBox="0 0 16 8"><path d="M3 8h10L8 0z" fill="#e0e0e0" /></svg></button>
            </DocTools>
            {["My Home", "Final Assembly-1.idw", "Final Assembly-1", "Final Assemblysa...ipn", "Final Assembly-2"].map((t) => <DocTab key={t}>{t}</DocTab>)}
            <DocTab $active>
              Final Assembly
              <svg width="9" height="9" viewBox="0 0 9 9"><path d="M1 1l7 7M8 1L1 8" stroke="#333" strokeWidth="2" /></svg>
            </DocTab>
          </DocBar>
        </Main>
      </Workspace>
    </Shell>
  );
}
